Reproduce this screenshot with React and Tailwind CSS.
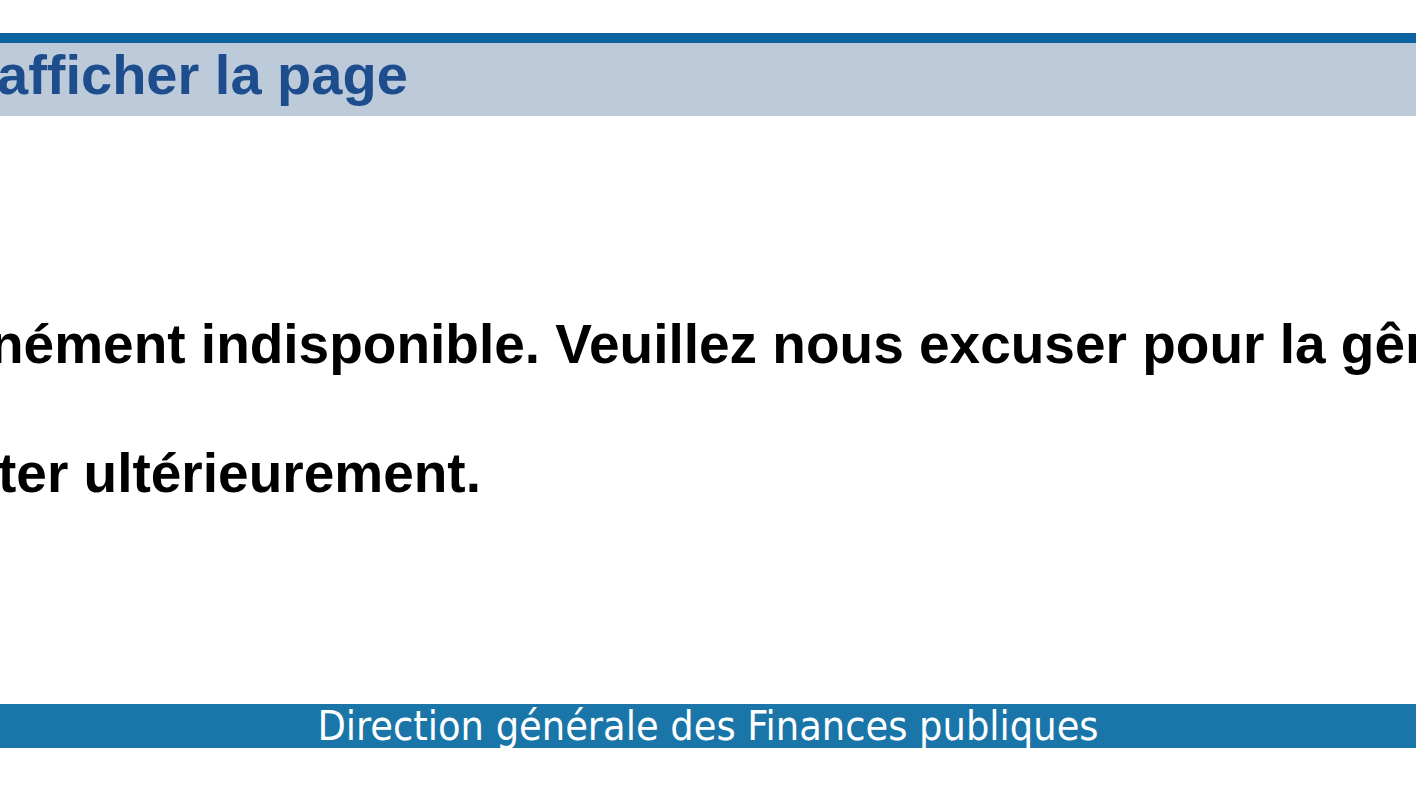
export default function App() {
  return (
    <div className="w-[1416px] h-[797px] overflow-hidden bg-white font-['Liberation_Sans',Arial,sans-serif]">
      <div className="h-[33px]" />
      <div className="h-[10px] bg-[#0b63a0]" />
      <div className="h-[73px] bg-[#bccad9] overflow-hidden whitespace-nowrap">
        <div className="ml-[-3px] text-[56px] leading-[64px] font-bold text-[#1d4d8d]">
          afficher la page
        </div>
      </div>
      <div className="h-[588px] overflow-hidden whitespace-nowrap text-black font-bold text-[55px] leading-[63px]">
        <div className="h-[197px]" />
        <div className="ml-[-10px]">
          nément indisponible. Veuillez nous excuser pour la gêne occasionnée.
        </div>
        <div className="h-[66px]" />
        <div className="ml-[-2px]">ter ultérieurement.</div>
      </div>
      <div className="h-[44px] bg-[#1a76a8] flex justify-center overflow-hidden whitespace-nowrap">
        <span className="text-white text-[41px] leading-[44px] font-['DejaVu_Sans_Condensed','DejaVu_Sans',sans-serif] [font-stretch:condensed]">
          Direction générale des Finances publiques
        </span>
      </div>
    </div>
  );
}
